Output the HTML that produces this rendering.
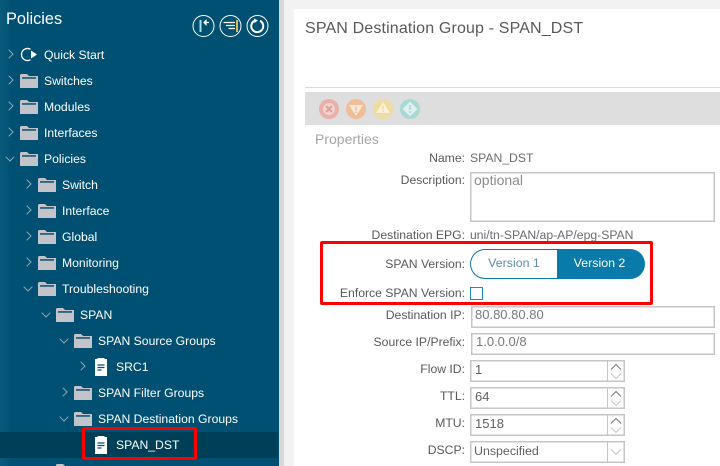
<!DOCTYPE html>
<html><head><meta charset="utf-8"><style>
html,body{margin:0;padding:0;overflow:hidden;height:466px;width:720px}
body{position:relative;background:#f2f2f2;font-family:"Liberation Sans",sans-serif}
div,svg,span{position:absolute}
.side{left:0;top:0;width:279px;height:466px;background:linear-gradient(90deg,#0a5a7c 0,#005073 12px,#005073 100%)}
.t{color:#fff;font-size:12.2px;line-height:16px;white-space:nowrap;margin-top:1px}
.l{right:255px;color:#58595b;font-size:12.2px;line-height:16px;white-space:nowrap;text-align:right}
.v{color:#6a6c70;font-size:12.2px;line-height:16px;white-space:nowrap}
.i{box-sizing:border-box;border:1px solid #c6c6c6;box-shadow:inset 0 0 0 .5px #c6c6c6;background:#fff}
.iv{color:#77797c;font-size:13px;line-height:16px;white-space:nowrap}
.red{box-sizing:border-box;border:3px solid #f00;border-radius:2px}
</style></head><body>
<svg width="0" height="0" style="left:0;top:0"><defs>
<symbol id="f" viewBox="0 0 18 14" preserveAspectRatio="none"><path d="M0 14V1.5Q0 0 1.5 0H7L9 2H18V14Z" fill="#c3c4c9"/><rect x="2" y="3.2" width="14" height="1.5" fill="#0a5070"/></symbol>
<symbol id="d" viewBox="0 0 12 18" preserveAspectRatio="none"><path d="M0 1H2.5V0H9.500V1H12V18H0Z" fill="#fff"/><path d="M2.500 7H9.500M2.500 9.500H9.500M2.500 12H6.500" stroke="#005073" stroke-width="1.200"/></symbol>
<symbol id="r" viewBox="0 0 6 10"><path d="M.7.7 5 5 .7 9.3" fill="none" stroke="#8fa7b5" stroke-width="1"/></symbol>
<symbol id="o" viewBox="0 0 10 6"><path d="M.7.7 5 5 9.3.7" fill="none" stroke="#8fa7b5" stroke-width="1"/></symbol>
</defs></svg>

<div class="side"></div>
<div style="left:279px;top:0;width:5px;height:466px;background:#d8d8d8"></div>
<div style="left:294px;top:9px;width:426px;height:457px;background:#fff"></div>

<div style="left:6px;top:9px;color:#fff;font-size:16.300px;line-height:20px">Policies</div>
<svg style="left:191px;top:14px" width="78" height="24" viewBox="0 0 78 24" fill="none">
<g stroke="#fff" stroke-width="1"><circle cx="12.5" cy="12" r="10.5"/><circle cx="39.5" cy="12" r="10.5"/><circle cx="66.5" cy="12" r="10.5"/></g>
<path d="M9.5 6V18" stroke="#a8dcf0" stroke-width="2"/><path d="M13 8.5H18M13 8.5 15 6.5V10.500Z" stroke="#fff" stroke-width="1.200"/>
<path d="M32.500 8.500H44M35 11.500H44M37.500 14.500H44" stroke="#fff" stroke-width="1.300"/><path d="M46 6V18" stroke="#f0c860" stroke-width="1.800"/>
<path d="M63.500 6.800A6 6 0 1 0 69 6.800" stroke="#fff" stroke-width="2"/><path d="M63 4.500 67 6.500 63.500 9Z" fill="#fff"/>
</svg>

<svg style="left:8px;top:49px" width="6" height="10"><use href="#r"/></svg>
<svg style="left:20px;top:47px" width="18" height="15" viewBox="0 0 18 15" fill="none"><path d="M10.500 2.300A6 6 0 1 0 10.500 12.700" stroke="#fff" stroke-width="1.300"/><path d="M11 3.500 17 7.500 11 11.500Z" fill="#fff"/></svg>
<div class="t" style="left:44px;top:46px">Quick Start</div>

<svg style="left:8px;top:75px" width="6" height="10"><use href="#r"/></svg>
<svg style="left:20px;top:74px" width="18" height="14"><use href="#f"/></svg>
<div class="t" style="left:44px;top:72px">Switches</div>

<svg style="left:8px;top:101px" width="6" height="10"><use href="#r"/></svg>
<svg style="left:20px;top:100px" width="18" height="14"><use href="#f"/></svg>
<div class="t" style="left:44px;top:98px">Modules</div>

<svg style="left:8px;top:127px" width="6" height="10"><use href="#r"/></svg>
<svg style="left:20px;top:126px" width="18" height="14"><use href="#f"/></svg>
<div class="t" style="left:44px;top:124px">Interfaces</div>

<svg style="left:5px;top:156px" width="10" height="6"><use href="#o"/></svg>
<svg style="left:20px;top:152px" width="18" height="14"><use href="#f"/></svg>
<div class="t" style="left:44px;top:150px">Policies</div>

<svg style="left:26px;top:179px" width="6" height="10"><use href="#r"/></svg>
<svg style="left:38px;top:178px" width="18" height="14"><use href="#f"/></svg>
<div class="t" style="left:62px;top:176px">Switch</div>

<svg style="left:26px;top:205px" width="6" height="10"><use href="#r"/></svg>
<svg style="left:38px;top:204px" width="18" height="14"><use href="#f"/></svg>
<div class="t" style="left:62px;top:202px">Interface</div>

<svg style="left:26px;top:231px" width="6" height="10"><use href="#r"/></svg>
<svg style="left:38px;top:230px" width="18" height="14"><use href="#f"/></svg>
<div class="t" style="left:62px;top:228px">Global</div>

<svg style="left:26px;top:257px" width="6" height="10"><use href="#r"/></svg>
<svg style="left:38px;top:256px" width="18" height="14"><use href="#f"/></svg>
<div class="t" style="left:62px;top:254px">Monitoring</div>

<svg style="left:23px;top:286px" width="10" height="6"><use href="#o"/></svg>
<svg style="left:38px;top:282px" width="18" height="14"><use href="#f"/></svg>
<div class="t" style="left:62px;top:280px">Troubleshooting</div>

<svg style="left:41px;top:312px" width="10" height="6"><use href="#o"/></svg>
<svg style="left:56px;top:308px" width="18" height="14"><use href="#f"/></svg>
<div class="t" style="left:80px;top:306px">SPAN</div>

<svg style="left:59px;top:338px" width="10" height="6"><use href="#o"/></svg>
<svg style="left:74px;top:334px" width="18" height="14"><use href="#f"/></svg>
<div class="t" style="left:98px;top:332px">SPAN Source Groups</div>

<svg style="left:80px;top:361px" width="6" height="10"><use href="#r"/></svg>
<svg style="left:95px;top:358px" width="12" height="18"><use href="#d"/></svg>
<div class="t" style="left:116px;top:358px">SRC1</div>

<svg style="left:62px;top:387px" width="6" height="10"><use href="#r"/></svg>
<svg style="left:74px;top:386px" width="18" height="14"><use href="#f"/></svg>
<div class="t" style="left:98px;top:384px">SPAN Filter Groups</div>

<svg style="left:59px;top:416px" width="10" height="6"><use href="#o"/></svg>
<svg style="left:74px;top:412px" width="18" height="14"><use href="#f"/></svg>
<div class="t" style="left:98px;top:410px">SPAN Destination Groups</div>

<div style="left:0;top:432px;width:278px;height:26px;background:#003f58"></div>
<svg style="left:95px;top:436px" width="12" height="18"><use href="#d"/></svg>
<div class="t" style="left:116px;top:436px">SPAN_DST</div>
<svg style="left:56px;top:464px" width="18" height="2" viewBox="0 0 18 2"><path d="M0 2V1Q0 0 1.500 0H7L9 2Z" fill="#c3c4c9"/></svg>
<div class="red" style="left:82px;top:427px;width:115px;height:33px"></div>

<div style="left:305px;top:19px;color:#58595b;font-size:16px;line-height:20px;white-space:nowrap;letter-spacing:.15px">SPAN Destination Group - SPAN_DST</div>
<div style="left:305px;top:87px;width:415px;height:1px;background:#dcdcdc"></div>
<div style="left:305px;top:92px;width:415px;height:33px;background:#dedede"></div>
<svg style="left:318px;top:98px" width="104" height="22" viewBox="0 0 104 22">
<circle cx="11" cy="11" r="10" fill="#e8b0a8"/><circle cx="11" cy="11" r="6" fill="#f0d4d0"/><path d="M8 8 14 14M14 8 8 14" stroke="#e0a098" stroke-width="2"/>
<circle cx="38" cy="11" r="10" fill="#efbd98"/><path d="M31 7H45L38 18Z" fill="#f6e6da"/><path d="M38 8.500V12.500M38 13.500V15" stroke="#efbd98" stroke-width="1.500"/>
<circle cx="65" cy="11" r="10" fill="#f0dca0"/><path d="M65 4 72 15H58Z" fill="#f8f2dc"/><path d="M65 7.500V11.500M65 12.500V14" stroke="#f0dca0" stroke-width="1.500"/>
<circle cx="92" cy="11" r="10" fill="#a8d8d2"/><path d="M92 3.500 99.500 11 92 18.500 84.500 11Z" fill="#e0f0ee"/><path d="M92 7V12M92 13V15" stroke="#a8d8d2" stroke-width="1.500"/>
</svg>
<div style="left:315px;top:130px;color:#a4a6a8;font-size:14px;line-height:18px">Properties</div>

<div class="l" style="top:150px">Name:</div><div class="v" style="left:470px;top:150px">SPAN_DST</div>
<div class="l" style="top:172px">Description:</div>
<div class="i" style="left:470px;top:172px;width:245px;height:50px"></div>
<div class="iv" style="left:474px;top:172px;font-size:14px;color:#8a8c8e">optional</div>
<div class="l" style="top:227px">Destination EPG:</div><div class="v" style="left:470px;top:227px">uni/tn-SPAN/ap-AP/epg-SPAN</div>

<div style="left:470px;top:249px;width:88px;height:30px;box-sizing:border-box;border:1px solid #0a7aaa;border-right:0;border-radius:15px 0 0 15px;background:#fff"></div>
<div style="left:557px;top:249px;width:88px;height:30px;background:#0a7aaa;border-radius:0 15px 15px 0"></div>
<div style="left:470px;top:254px;width:88px;text-align:center;color:#5b8ea8;font-size:12.400px;line-height:18px">Version 1</div>
<div style="left:557px;top:254px;width:85px;text-align:center;color:#fff;font-size:12.400px;line-height:18px">Version 2</div>
<div class="l" style="top:256px">SPAN Version:</div>
<div class="l" style="top:285px">Enforce SPAN Version:</div>
<div style="left:470px;top:287px;width:13px;height:13px;box-sizing:border-box;border:1px solid #1a8ac0;background:#fff"></div>
<div class="red" style="left:320px;top:241px;width:333px;height:64px"></div>

<div class="l" style="top:307px">Destination IP:</div>
<div class="i" style="left:471px;top:306px;width:244px;height:22px"></div>
<div class="iv" style="left:475px;top:307px">80.80.80.80</div>
<div class="l" style="top:334px">Source IP/Prefix:</div>
<div class="i" style="left:471px;top:333px;width:244px;height:22px"></div>
<div class="iv" style="left:476px;top:334px">1.0.0.0/8</div>

<div class="l" style="top:361px">Flow ID:</div>
<div class="i" style="left:470px;top:360px;width:155px;height:22px"></div>
<div class="iv" style="left:475px;top:362px;color:#5f6165">1</div>
<div class="l" style="top:388px">TTL:</div>
<div class="i" style="left:470px;top:387px;width:155px;height:22px"></div>
<div class="iv" style="left:475px;top:389px;color:#5f6165">64</div>
<div class="l" style="top:415px">MTU:</div>
<div class="i" style="left:470px;top:414px;width:155px;height:22px"></div>
<div class="iv" style="left:475px;top:416px;color:#5f6165">1518</div>
<div class="l" style="top:442px">DSCP:</div>
<div class="i" style="left:470px;top:441px;width:155px;height:22px"></div>
<div class="iv" style="left:474px;top:443px;font-size:12.400px;color:#5f6165">Unspecified</div>

<svg style="left:470px;top:360px" width="155" height="103" viewBox="0 0 155 103" fill="none">
<path d="M137.500 1V22M137.500 28V49M137.500 55V76M137.500 82V103" stroke="#c6c6c6"/>
<g stroke="#77797c"><path d="M141 9.500 146 4.500 151 9.500M141 36.500 146 31.500 151 36.500M141 63.500 146 58.500 151 63.500"/></g>
<g stroke="#c4c6c8"><path d="M141 13.500 146 18.500 151 13.500M141 40.500 146 45.500 151 40.500M141 67.500 146 72.500 151 67.500M141 89.500 146 94.500 151 89.500"/></g>
</svg>
</body></html>
